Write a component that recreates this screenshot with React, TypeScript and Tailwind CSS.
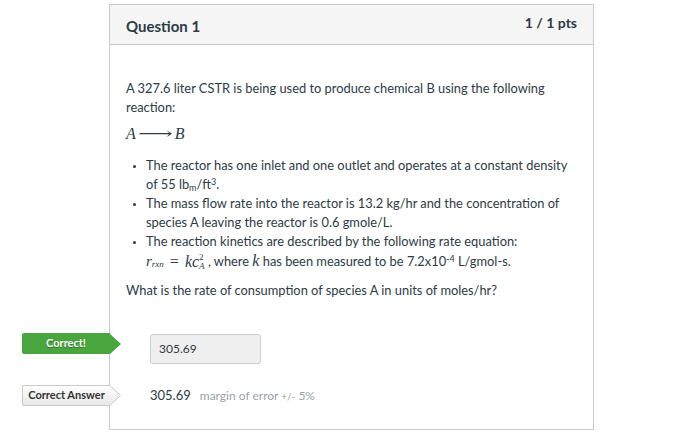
import React from 'react';

const font = { fontFamily: 'Lato, "Open Sans", sans-serif' };
const serif = { fontFamily: '"Liberation Serif", "DejaVu Serif", serif' };

const M: React.FC<{ children: React.ReactNode }> = ({ children }) => (
    <span className="italic text-[16px]" style={serif}>{children}</span>
);

const App: React.FC = () => {
    return (
        <div className="w-[693px] h-[445px] bg-white relative text-[#2d3b45]" style={font}>
            <div className="pl-[109px] pt-[4px]">
                <div className="w-[485px] h-[426px] border border-[#c7cdd1] flex flex-col">
                    {/* Header */}
                    <div className="h-[40px] bg-[#f5f5f5] border-b border-[#c7cdd1] flex justify-between px-[16px]">
                        <span className="text-[15px] font-bold mt-[11px] leading-[20px]">Question 1</span>
                        <span className="text-[14px] font-bold mt-[8px] leading-[20px]">1 / 1 pts</span>
                    </div>

                    {/* Body */}
                    <div className="pl-[16px] pr-[18px] pt-[34px] text-[12.85px] leading-[19px]">
                        <p>A 327.6 liter CSTR is being used to produce chemical B using the following reaction:</p>
                        <p className="mt-[7px] leading-[20px] flex items-center">
                            <M>A</M>
                            <span className="text-[16px] inline-block scale-x-150 mx-[8px]" style={serif}>⟶</span>
                            <M>B</M>
                        </p>
                        <ul className="mt-[12px] pl-[20px] list-disc marker:text-[9px]">
                            <li>The reactor has one inlet and one outlet and operates at a constant density of 55 lb<sub className="text-[9px] leading-none">m</sub>/ft<sup className="text-[9px] leading-none">3</sup>.</li>
                            <li>The mass flow rate into the reactor is 13.2 kg/hr and the concentration of species A leaving the reactor is 0.6 gmole/L.</li>
                            <li>
                                The reaction kinetics are described by the following rate equation:<br />
                                <span className="inline-flex items-end leading-[21px] h-[21px]">
                                    <span className="italic text-[15px]" style={serif}>r</span>
                                    <span className="italic text-[9px] leading-none mb-[3px]" style={serif}>rxn</span>
                                    <span className="text-[16px] mx-[6px]" style={serif}>=</span>
                                    <span className="italic text-[16px]" style={serif}>kc</span>
                                    <span className="inline-flex flex-col text-[9px] leading-[9px] italic mb-[1px]" style={serif}>
                                        <span className="not-italic">2</span>
                                        <span>A</span>
                                    </span>
                                </span>
                                {' '}, where <M>k</M> has been measured to be 7.2x10<sup className="text-[9px] leading-none">-4</sup> L/gmol-s.
                            </li>
                        </ul>
                        <p className="mt-[9px]">What is the rate of consumption of species A in units of moles/hr?</p>
                    </div>

                    {/* Answers */}
                    <div className="pl-[40px] mt-[34px]">
                        <div className="w-[111px] h-[30px] rounded-[3px] border border-[#c7cdd1] bg-[#efefef] flex items-center pl-[8px] text-[12px]">305.69</div>
                        <div className="mt-[22px] flex items-baseline gap-[9px]">
                            <span className="text-[13px]">305.69</span>
                            <span className="text-[12px] text-[#9aa3a8]">margin of error <span className="text-[10px]">+/-</span> 5%</span>
                        </div>
                    </div>
                </div>
            </div>

            {/* Left labels */}
            <div className="absolute left-[22px] top-[333px] h-[21px] w-[100px] flex items-center">
                <div className="h-[21px] w-[88px] bg-[#49a63f] text-white text-[11px] font-bold flex items-center justify-center rounded-l-[2px]" style={{ textShadow: '0 1px 1px rgba(0,0,0,0.3)' }}>Correct!</div>
                <div className="w-0 h-0 border-y-[10.5px] border-y-transparent border-l-[11px] border-l-[#49a63f]" />
            </div>
            <div className="absolute left-[22px] top-[385px] h-[21px] w-[100px] flex items-center">
                <div className="h-[21px] w-[88px] bg-gradient-to-b from-[#ffffff] to-[#e8e8e8] border border-r-0 border-[#c9c9c9] text-[#333] text-[11px] font-bold flex items-center justify-center rounded-l-[2px]">Correct Answer</div>
                <svg width="12" height="21" viewBox="0 0 12 21" className="-ml-px">
                    <defs>
                        <linearGradient id="g" x1="0" y1="0" x2="0" y2="1">
                            <stop offset="0" stopColor="#ffffff" />
                            <stop offset="1" stopColor="#e8e8e8" />
                        </linearGradient>
                    </defs>
                    <path d="M0 0.5 L1 0.5 L11.5 10.5 L1 20.5 L0 20.5 Z" fill="url(#g)" stroke="#c9c9c9" />
                    <rect x="0" y="1" width="1.5" height="19" fill="url(#g)" />
                </svg>
            </div>
        </div>
    );
};

export default App;
